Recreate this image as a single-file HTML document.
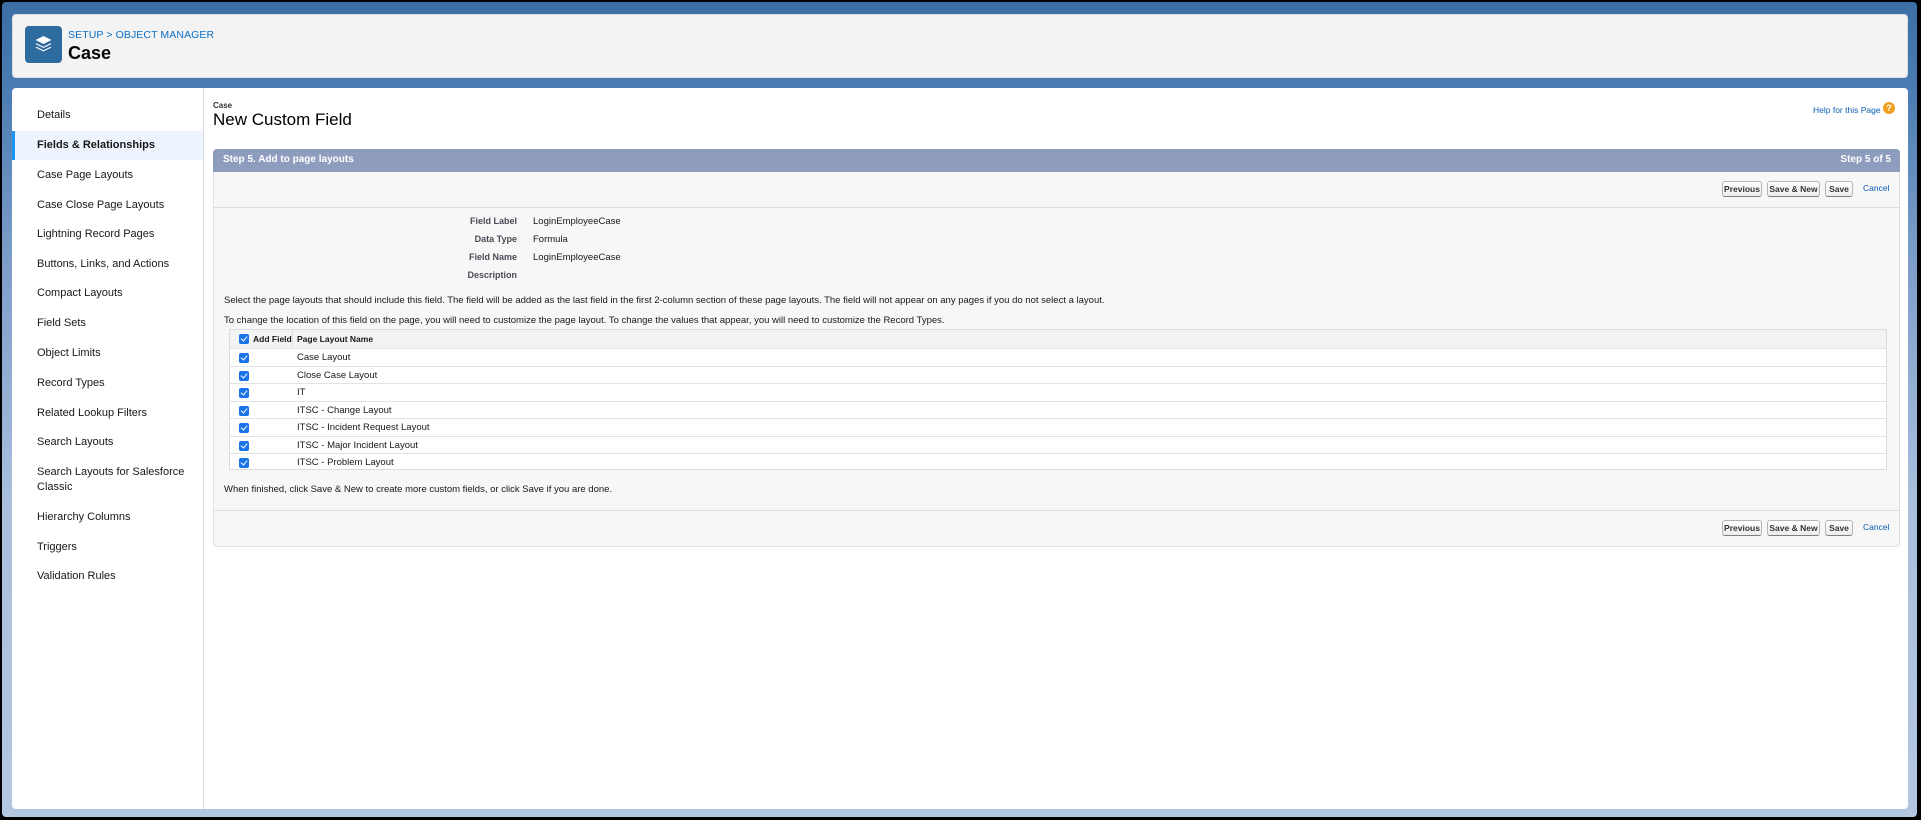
<!DOCTYPE html>
<html><head><meta charset="utf-8"><style>
*{box-sizing:border-box;margin:0;padding:0}
body{width:1921px;height:820px;overflow:hidden;background:#000;font-family:"Liberation Sans",Arial,sans-serif;color:#181818;position:relative}
#bg{position:absolute;left:2px;top:2px;right:4px;bottom:3px;background:linear-gradient(180deg,#3a6ea5 0px,#4b7db2 90px,#7b9cc8 250px,#a9bfdd 500px,#b3c7e2 820px);border-radius:4px}
#hdr{position:absolute;left:12px;top:14px;width:1896px;height:64px;background:#f3f3f3;border-radius:4px;border:1px solid #d8dde6}
#icon{position:absolute;left:12px;top:11px;width:37px;height:37px;background:#2e6b9e;border-radius:4px}
.bc{position:absolute;left:55px;top:14px;font-size:10.5px;color:#0b6fc4;letter-spacing:.1px}
.ttl{position:absolute;left:55px;top:28px;font-size:18px;font-weight:bold;color:#080707}
#main{position:absolute;left:12px;top:88px;width:1896px;height:721px;background:#fff;border-radius:4px}
#side{position:absolute;left:0;top:0;width:192px;height:721px;border-right:1px solid #dddbda}
.si{position:absolute;left:25px;font-size:11px;color:#181818;line-height:15px}
.sel{position:absolute;left:0;top:43px;width:191px;height:29px;background:#eef4fe;border-left:3px solid #1b96ff}
.c{position:absolute;font-size:9.5px;white-space:nowrap}
.btn{position:absolute;top:0;height:16px;border:1px solid #b5b5b5;border-bottom-color:#7f7f7f;border-radius:3px;background:linear-gradient(#fff,#ededed);font-size:8.5px;font-weight:bold;color:#333;text-align:center;line-height:14px;white-space:nowrap;overflow:hidden}
.lbl{position:absolute;width:120px;text-align:right;left:183px;font-size:9px;font-weight:bold;color:#4a4a56}
.val{position:absolute;left:319px;font-size:9.5px}
.cb{position:absolute;width:10px;height:10px;background:#1a73e8;border-radius:2px}
.cb:after{content:"";position:absolute;left:3px;top:1px;width:3px;height:5px;border:solid #fff;border-width:0 1.5px 1.5px 0;transform:rotate(40deg)}
.row{position:absolute;left:0;width:1656px;height:17.5px;border-top:1px solid #e3e3e3;background:#fff}
</style></head><body>
<div id="bg"></div>
<div id="hdr">
 <div id="icon"><svg width="37" height="37" viewBox="0 0 37 37"><g fill="#fff"><path d="M18.5 10l8 4-8 4-8-4z"/><path d="M11.5 17.3l7 3.5 7-3.5 1 .7-8 4-8-4z"/><path d="M11.5 20.8l7 3.5 7-3.5 1 .7-8 4-8-4z"/></g></svg></div>
 <div class="bc">SETUP &gt; OBJECT MANAGER</div>
 <div class="ttl">Case</div>
</div>
<div id="main">
 <div id="side">
  <div class="sel"></div>
  <div class="si" style="top:20px">Details</div>
  <div class="si" style="top:50px;font-weight:bold">Fields &amp; Relationships</div>
  <div class="si" style="top:80px">Case Page Layouts</div>
  <div class="si" style="top:110px">Case Close Page Layouts</div>
  <div class="si" style="top:139px">Lightning Record Pages</div>
  <div class="si" style="top:169px">Buttons, Links, and Actions</div>
  <div class="si" style="top:198px">Compact Layouts</div>
  <div class="si" style="top:228px">Field Sets</div>
  <div class="si" style="top:258px">Object Limits</div>
  <div class="si" style="top:288px">Record Types</div>
  <div class="si" style="top:318px">Related Lookup Filters</div>
  <div class="si" style="top:347px">Search Layouts</div>
  <div class="si" style="top:377px">Search Layouts for Salesforce<br>Classic</div>
  <div class="si" style="top:422px">Hierarchy Columns</div>
  <div class="si" style="top:452px">Triggers</div>
  <div class="si" style="top:481px">Validation Rules</div>
 </div>
 <div class="c" style="left:201px;top:13px;font-size:8px;font-weight:bold;color:#333">Case</div>
 <div class="c" style="left:201px;top:22px;font-size:17px;color:#000">New Custom Field</div>
 <div class="c" style="left:1801px;top:17px;font-size:8.5px;color:#0b5fb3">Help for this Page</div>
 <div style="position:absolute;left:1871px;top:14px;width:12px;height:12px;border-radius:50%;background:#f0a020;color:#fff;font-size:9px;font-weight:bold;text-align:center;line-height:12px">?</div>
 <div style="position:absolute;left:201px;top:61px;width:1687px;height:398px;background:#f7f7f7;border:1px solid #e0e0e0;border-top:none;border-radius:4px">
  <div style="position:absolute;left:-1px;top:0;width:1687px;height:23px;background:#8e9dbe;border-radius:4px 4px 0 0;color:#fff;font-weight:bold;font-size:10px">
   <span style="position:absolute;left:10px;top:5px">Step 5. Add to page layouts</span>
   <span style="position:absolute;right:9px;top:5px">Step 5 of 5</span>
  </div>
  <div style="position:absolute;left:0;top:23px;width:1685px;height:36px;border-bottom:1px solid #dcdcdc">
   <div style="position:absolute;top:9px;left:0">
    <div class="btn" style="left:1508px;width:40px">Previous</div>
    <div class="btn" style="left:1553px;width:53px">Save &amp; New</div>
    <div class="btn" style="left:1611px;width:28px">Save</div>
    <div class="c" style="left:1649px;top:2px;font-size:8.5px;color:#0b5fb3">Cancel</div>
   </div>
  </div>
  <div class="lbl" style="top:67px">Field Label</div><div class="val" style="top:67px">LoginEmployeeCase</div>
  <div class="lbl" style="top:85px">Data Type</div><div class="val" style="top:85px">Formula</div>
  <div class="lbl" style="top:103px">Field Name</div><div class="val" style="top:103px">LoginEmployeeCase</div>
  <div class="lbl" style="top:121px">Description</div>
  <div class="c" style="left:10px;top:146px">Select the page layouts that should include this field. The field will be added as the last field in the first 2-column section of these page layouts. The field will not appear on any pages if you do not select a layout.</div>
  <div class="c" style="left:10px;top:166px">To change the location of this field on the page, you will need to customize the page layout. To change the values that appear, you will need to customize the Record Types.</div>
  <div style="position:absolute;left:15px;top:180px;width:1658px;height:141px;border:1px solid #dcdcdc;background:#fff;overflow:hidden">
   <div style="position:absolute;left:0;top:0;width:1656px;height:18px;background:#f2f3f3"></div>
   <div style="position:absolute;left:62px;top:0;width:1px;height:18px;background:#e0e0e0"></div>
   <div class="cb" style="left:9px;top:4px"></div>
   <div class="c" style="left:23px;top:4px;font-size:8.5px;font-weight:bold">Add Field</div>
   <div class="c" style="left:67px;top:4px;font-size:8.5px;font-weight:bold">Page Layout Name</div>
   <div class="row" style="top:18px"><div class="cb" style="left:9px;top:4px"></div><div class="c" style="left:67px;top:3px">Case Layout</div></div>
   <div class="row" style="top:35.5px"><div class="cb" style="left:9px;top:4px"></div><div class="c" style="left:67px;top:3px">Close Case Layout</div></div>
   <div class="row" style="top:53px"><div class="cb" style="left:9px;top:4px"></div><div class="c" style="left:67px;top:3px">IT</div></div>
   <div class="row" style="top:70.5px"><div class="cb" style="left:9px;top:4px"></div><div class="c" style="left:67px;top:3px">ITSC - Change Layout</div></div>
   <div class="row" style="top:88px"><div class="cb" style="left:9px;top:4px"></div><div class="c" style="left:67px;top:3px">ITSC - Incident Request Layout</div></div>
   <div class="row" style="top:105.5px"><div class="cb" style="left:9px;top:4px"></div><div class="c" style="left:67px;top:3px">ITSC - Major Incident Layout</div></div>
   <div class="row" style="top:123px"><div class="cb" style="left:9px;top:4px"></div><div class="c" style="left:67px;top:3px">ITSC - Problem Layout</div></div>
  </div>
  <div class="c" style="left:10px;top:335px">When finished, click Save &amp; New to create more custom fields, or click Save if you are done.</div>
  <div style="position:absolute;left:0;top:361px;width:1685px;border-top:1px solid #dcdcdc">
   <div style="position:absolute;top:9px;left:0">
    <div class="btn" style="left:1508px;width:40px">Previous</div>
    <div class="btn" style="left:1553px;width:53px">Save &amp; New</div>
    <div class="btn" style="left:1611px;width:28px">Save</div>
    <div class="c" style="left:1649px;top:2px;font-size:8.5px;color:#0b5fb3">Cancel</div>
   </div>
  </div>
 </div>
</div>
</body></html>
